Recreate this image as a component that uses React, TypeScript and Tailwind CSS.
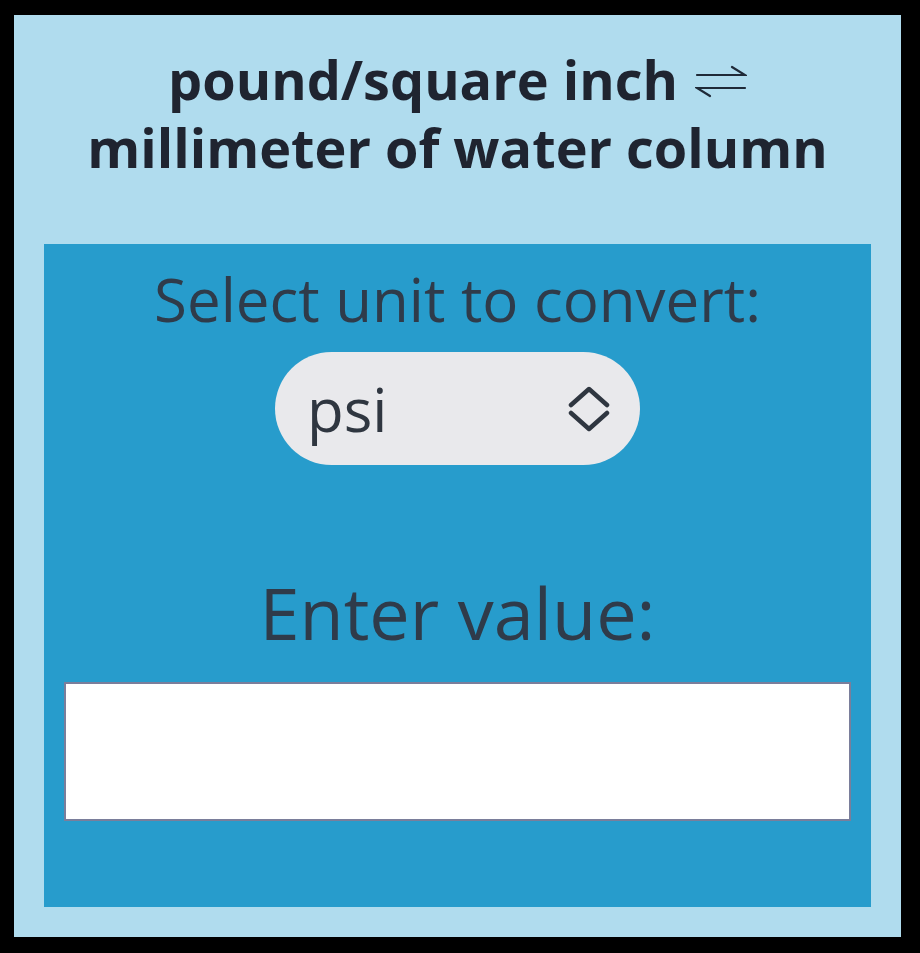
import React from "react";

const sans = { fontFamily: '"Open Sans", "Noto Sans", "DejaVu Sans", sans-serif' };

function UpDownChevrons() {
  return (
    <svg width="42" height="46" viewBox="0 0 42 46" fill="none" stroke="#2f3640" strokeWidth="4.5" strokeLinecap="round" strokeLinejoin="round">
      <path d="M3 19 L21 3 L39 19" />
      <path d="M3 27 L21 43 L39 27" />
    </svg>
  );
}

// Right harpoon over left harpoon (⇌)
function Harpoons() {
  return (
    <svg width="52" height="34" viewBox="0 0 52 34" fill="none" stroke="#1f2a38" strokeWidth="2.2" strokeLinecap="round" className="inline-block align-baseline ml-[3px] mb-[1px]">
      <path d="M2 10 L50 10 L37 2" />
      <path d="M50 23 L2 23 L15 31" />
    </svg>
  );
}

export default function App() {
  return (
    <div className="w-[920px] h-[953px] bg-black pl-[14px] pt-[15px] pr-[19px] pb-[16px]" style={sans}>
      <div className="w-full h-full bg-[#b0dcee] flex flex-col px-[30px] pb-[30px]">
        <h1 className="pt-[30px] h-[229px] text-center text-[54px] leading-[68px] font-bold text-[#1f2430]">
          <span>
            pound/square inch{" "}
            <Harpoons />
          </span>
          <br />
          <span>millimeter of water column</span>
        </h1>
        <div className="flex-1 bg-[#279ccc] flex flex-col items-center px-[20px] pt-[14px]">
          <label className="text-[60px] leading-[82px] text-[#2f3b4a]">Select unit to convert:</label>
          <div className="mt-[12px] w-[365px] h-[113px] rounded-full bg-[#e9e9ec] flex items-center justify-between pl-[32px] pr-[30px]">
            <span className="text-[60px] leading-[82px] text-[#2f3640]">psi</span>
            <UpDownChevrons />
          </div>
          <label className="mt-[98px] text-[72px] leading-[98px] text-[#2f3b4a]">Enter value:</label>
          <input
            type="text"
            className="mt-[21px] w-full h-[139px] bg-white border-2 border-[#7a7e9b] outline-none"
          />
        </div>
      </div>
    </div>
  );
}
